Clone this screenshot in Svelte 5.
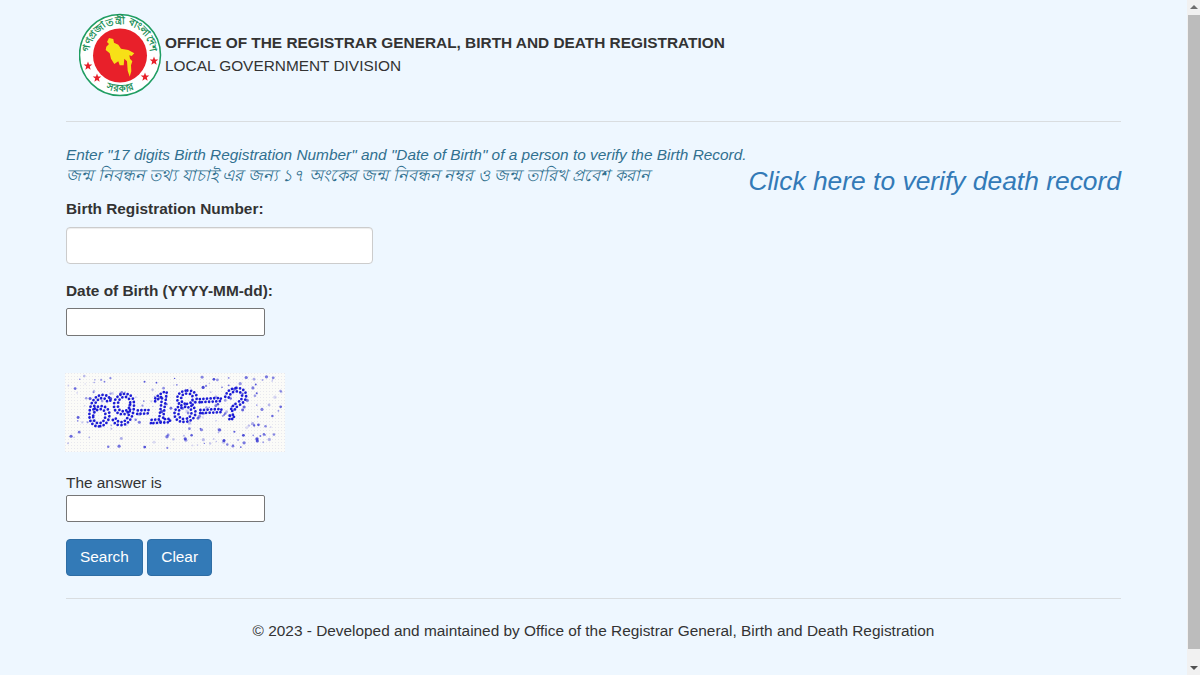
<script>
	// seeded noise so the captcha looks the same on every load
	let seed = 7;
	function rnd() {
		seed = (seed * 16807) % 2147483647;
		return seed / 2147483647;
	}

	const specks = new Array(190).fill().map(() => ({
		x: 3 + rnd() * 214,
		y: 3 + rnd() * 73,
		r: 0.6 + rnd() * 1.1,
		o: 0.15 + rnd() * 0.7,
	}));

	const stars = [
		[88, 66],
		[97, 78],
		[145, 77],
		[154, 61],
	];

	function starPoints(cx, cy, r) {
		const pts = [];
		for (let i = 0; i < 10; i++) {
			const a = -Math.PI / 2 + (i * Math.PI) / 5;
			const d = i % 2 ? r * 0.42 : r;
			pts.push(`${cx + Math.cos(a) * d},${cy + Math.sin(a) * d}`);
		}
		return pts.join(" ");
	}
</script>

<div class="page">
	<header class="brand">
		<svg class="logo" viewBox="79 13 84 85" width="84" height="85">
			<circle cx="120" cy="55" r="40.5" fill="#fff" stroke="#1f9d62" stroke-width="1.5" />
			<circle cx="120" cy="55.5" r="27" fill="#e8202a" />
			<polygon
				points="109,38 113.3,39 114,42.7 118.3,44.7 121,48.7 128.3,50 134.3,53.3 131.7,56 129.3,55.3 130,58.7 132.3,61.3 131,65.3 131.3,71.3 129.7,76.7 127.7,70.7 127,61.3 124.3,58.7 123.7,65.3 119.7,65.3 118.3,61.3 114.3,64 111,58.7 109.7,53.3 105.7,50 106.3,46.7 109,44 107,42"
				fill="#f7e017"
			/>
			<path id="arc" d="M91 64a30.5 30.5 0 1 1 58 0" fill="none" />
			<path id="arc2" d="M104 88a36 36 0 0 0 33 0" fill="none" />
			<text class="seal"><textPath href="#arc" startOffset="50%" text-anchor="middle">গণপ্রজাতন্ত্রী বাংলাদেশ</textPath></text>
			<text class="seal"><textPath href="#arc2" startOffset="50%" text-anchor="middle">সরকার</textPath></text>
			{#each stars as s}
				<polygon points={starPoints(s[0], s[1], 4.5)} fill="#e8202a" />
			{/each}
		</svg>
		<div class="brand-text">
			<div class="brand-title">OFFICE OF THE REGISTRAR GENERAL, BIRTH AND DEATH REGISTRATION</div>
			<div>LOCAL GOVERNMENT DIVISION</div>
		</div>
	</header>

	<hr class="rule-top" />

	<div class="intro">
		<div class="hint">
			<div>Enter "17 digits Birth Registration Number" and "Date of Birth" of a person to verify the Birth Record.</div>
			<div class="hint-bn">জন্ম নিবন্ধন তথ্য যাচাই এর জন্য ১৭ অংকের জন্ম নিবন্ধন নম্বর ও জন্ম তারিখ প্রবেশ করান</div>
		</div>
		<a class="death-link" href="#death">Click here to verify death record</a>
	</div>

	<form on:submit|preventDefault>
		<label class="field-label" for="brn">Birth Registration Number:</label>
		<input id="brn" class="input-wide" type="text" />

		<label class="field-label dob-label" for="dob">Date of Birth (YYYY-MM-dd):</label>
		<input id="dob" class="input-small" type="text" />

		<svg class="captcha" viewBox="0 0 220 79" width="220" height="79">
			<defs>
				<pattern id="grain" width="3" height="3" patternUnits="userSpaceOnUse">
					<rect width="3" height="3" fill="#fbfbf8" />
					<rect width="1" height="1" fill="#e8e8ee" />
				</pattern>
				<filter id="soft">
					<feGaussianBlur stdDeviation="0.35" />
				</filter>
			</defs>
			<rect width="220" height="79" fill="url(#grain)" />
			<g filter="url(#soft)">
				{#each specks as s}
					<circle cx={s.x} cy={s.y} r={s.r} fill="#2a2ad0" opacity={s.o} />
				{/each}
				<text class="captcha-text" x="22" y="49" textLength="160" transform="rotate(-3 110 40)">69-18=?</text>
			</g>
		</svg>

		<label class="answer-label" for="answer">The answer is</label>
		<input id="answer" class="input-small answer-input" type="text" />

		<div class="actions">
			<button type="submit">Search</button>
			<button type="reset">Clear</button>
		</div>
	</form>

	<hr class="rule-bottom" />

	<footer>© 2023 - Developed and maintained by Office of the Registrar General, Birth and Death Registration</footer>
</div>

<div class="scrollbar">
	<div class="arrow arrow-up"></div>
	<div class="thumb"></div>
	<div class="arrow arrow-down"></div>
</div>

<style>
	:global(body) {
		background-color: #eef7ff;
		color: #333;
		font-family: "Liberation Sans", "Noto Sans", Arial, sans-serif;
		font-size: 15.4px;
		line-height: 22px;
		overflow: hidden;
	}

	.page {
		box-sizing: border-box;
		width: 1187px;
		height: 675px;
		padding: 13px 66px 0;
	}

	.brand {
		display: flex;
		align-items: center;
		padding-left: 13px;
	}
	.logo {
		flex: none;
	}
	.seal {
		font-family: "Noto Sans", "Liberation Sans", sans-serif;
		font-size: 10px;
		font-weight: bold;
		fill: #1b8f58;
	}
	.brand-text {
		margin: -3px 0 0 2px;
	}
	.brand-title {
		font-weight: bold;
		margin-bottom: 1px;
	}

	hr {
		border: 0;
		border-top: 1px solid #d9dde0;
		margin: 0;
	}
	.rule-top {
		margin-top: 23px;
	}

	.intro {
		display: flex;
		justify-content: space-between;
		align-items: flex-end;
		margin-top: 22px;
	}
	.hint {
		color: #31708f;
		font-style: italic;
		line-height: 21px;
	}
	.hint-bn {
		font-size: 16.3px;
	}
	.death-link {
		color: #337ab7;
		font-size: 26.4px;
		font-style: italic;
		line-height: 30px;
		text-decoration: none;
		margin-bottom: -10px;
	}

	form {
		display: flex;
		flex-direction: column;
		align-items: flex-start;
		margin-top: 12px;
	}
	.field-label {
		font-weight: bold;
	}
	.dob-label {
		margin-top: 16px;
	}
	input {
		box-sizing: border-box;
		background: #fff;
		padding: 0 10px;
		margin: 0;
		font: inherit;
	}
	.input-wide {
		width: 307px;
		height: 37px;
		margin-top: 7px;
		border: 1px solid #ccc;
		border-radius: 4px;
		box-shadow: inset 0 1px 1px rgba(0, 0, 0, 0.075);
	}
	.input-small {
		width: 199px;
		height: 28px;
		margin-top: 6px;
		border: 1px solid #767676;
		border-radius: 2px;
	}
	.answer-input {
		height: 27px;
	}
	.captcha {
		display: block;
		margin: 37px 0 0 -1px;
	}
	.captcha-text {
		font-family: "Liberation Sans", sans-serif;
		font-size: 44px;
		font-style: italic;
		fill: none;
		stroke: #1a1ad6;
		stroke-width: 2.8;
		stroke-linecap: round;
		stroke-dasharray: 0 3.6;
	}
	.answer-label {
		margin-top: 20px;
		margin-bottom: -5px;
	}

	.actions {
		display: flex;
		gap: 4.5px;
		margin-top: 17px;
	}
	button {
		height: 37px;
		padding: 0 13px 1px;
		color: #fff;
		background-color: #337ab7;
		border: 1px solid #2e6da4;
		border-radius: 4px;
		font: inherit;
	}

	.rule-bottom {
		margin-top: 22px;
	}
	footer {
		margin-top: 21px;
		text-align: center;
	}

	.scrollbar {
		position: fixed;
		top: 0;
		right: 0;
		bottom: 0;
		width: 13px;
		display: flex;
		flex-direction: column;
		align-items: center;
		background-color: #f1f1f1;
	}
	.thumb {
		flex: 1;
		width: 12px;
		margin: 1px 0 12px;
		background-color: #bcbcbc;
	}
	.arrow {
		flex: none;
		width: 0;
		height: 0;
		margin: 5px 0;
		border-left: 4px solid transparent;
		border-right: 4px solid transparent;
	}
	.arrow-up {
		border-bottom: 4px solid #6e6e6e;
	}
	.arrow-down {
		border-top: 4px solid #505050;
	}
</style>
